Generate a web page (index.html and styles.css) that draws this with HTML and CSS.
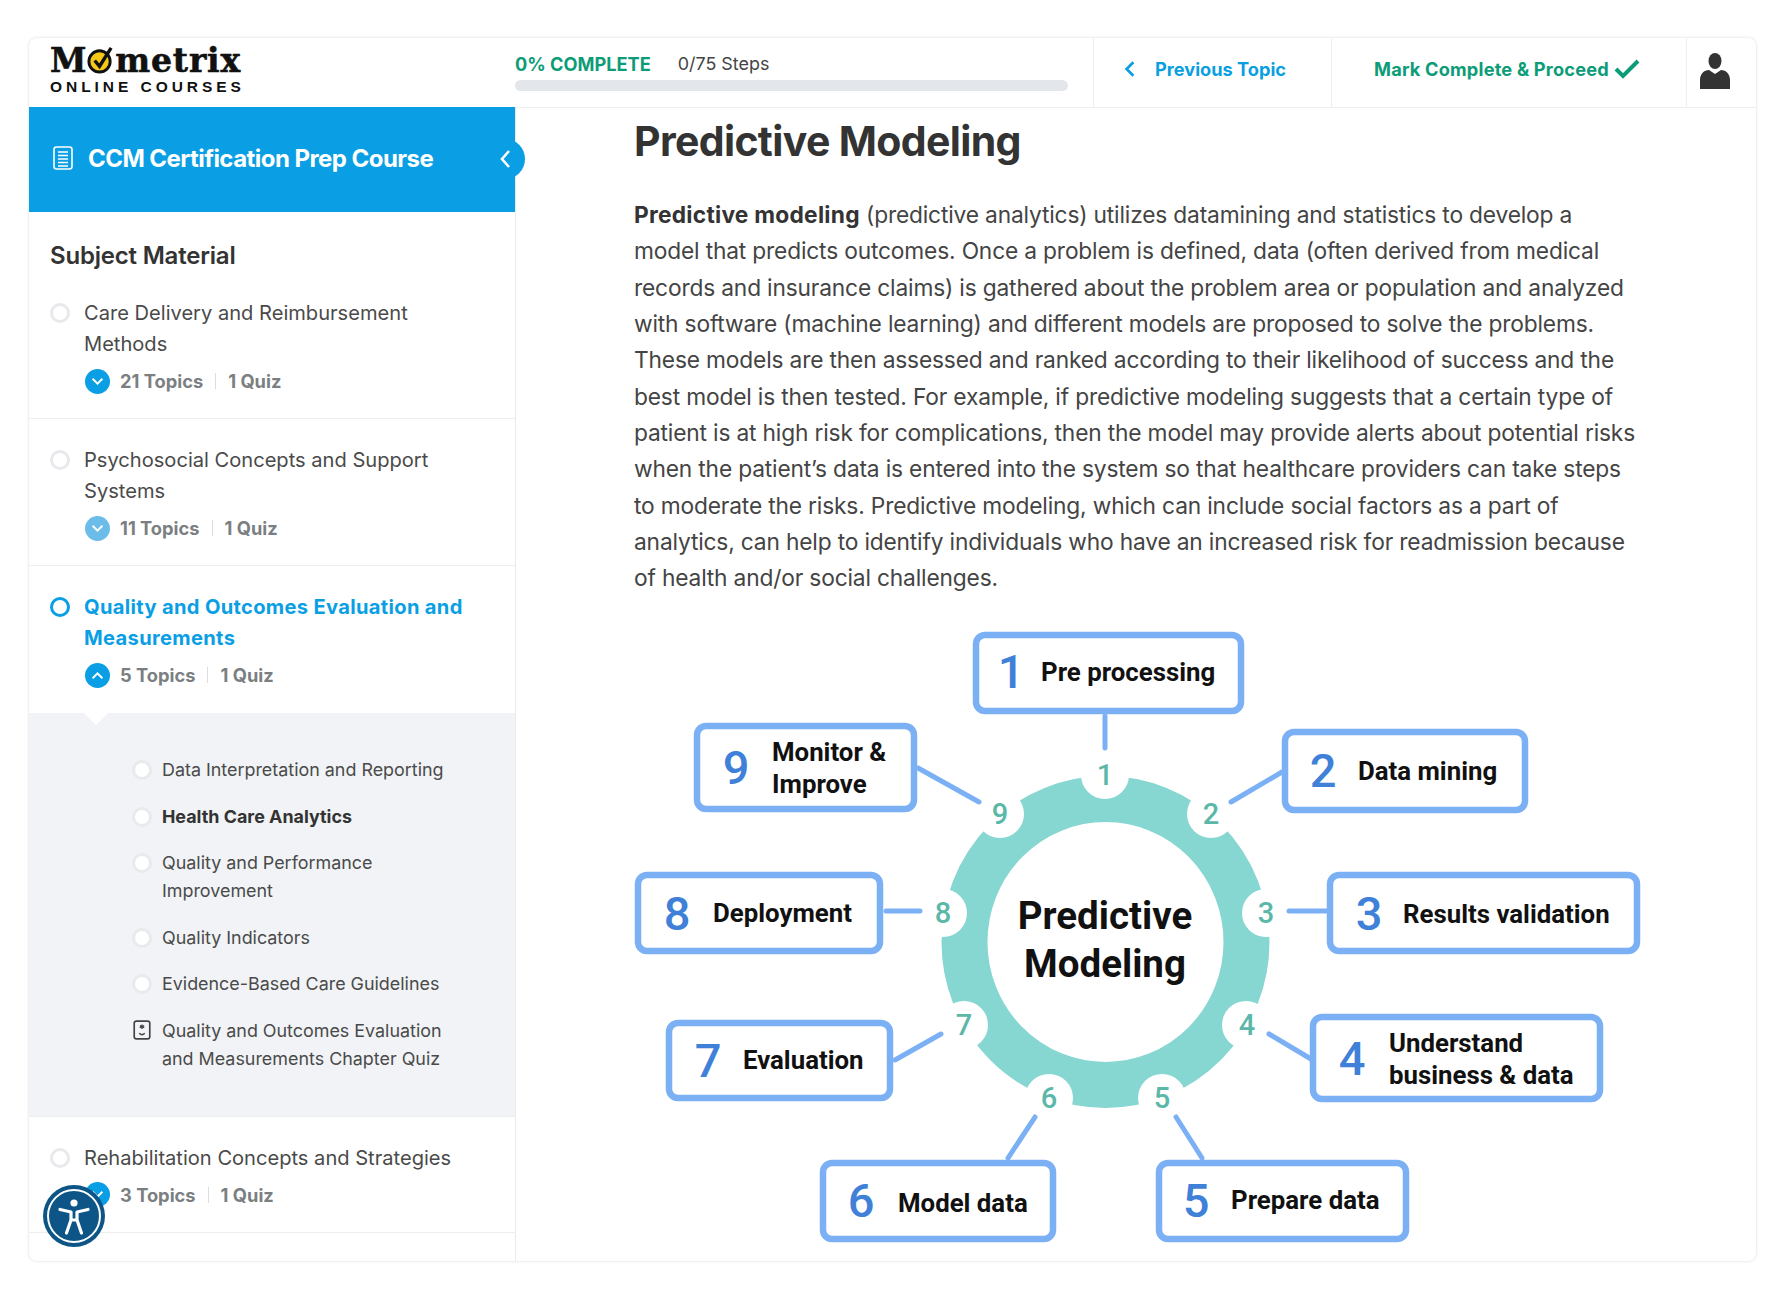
FILE: index.html
```html
<!DOCTYPE html>
<html lang="en">
<head>
<meta charset="utf-8">
<title>Predictive Modeling</title>
<link rel="stylesheet" href="styles.css">
</head>
<body>
<div class="app">
  <header class="topbar">
    <div class="logo">
      <div class="logo-main">M<svg class="logo-o" viewBox="0 0 30 30"><circle cx="14" cy="17" r="11" fill="#f5c818" stroke="#111" stroke-width="3"/><path d="M9 16l5 6 L26 3" fill="none" stroke="#111" stroke-width="3.5"/></svg>metrix</div>
      <div class="logo-sub">ONLINE COURSES</div>
    </div>
    <div class="progress">
      <div class="progress-text"><span class="pct">0% COMPLETE</span><span class="steps">0/75 Steps</span></div>
      <div class="bar"></div>
    </div>
    <a class="nav-btn prev"><svg class="ico-chev" viewBox="0 0 12 16"><path d="M9 2L3 8l6 6" fill="none" stroke="currentColor" stroke-width="2.4"/></svg>Previous Topic</a>
    <a class="nav-btn mark">Mark Complete &amp; Proceed<svg class="ico-check" viewBox="0 0 26 20"><path d="M2 10l7 7L24 2" fill="none" stroke="currentColor" stroke-width="4"/></svg></a>
    <div class="user"><svg viewBox="0 0 32 36" class="ico-user"><ellipse cx="16" cy="8" rx="6.500" ry="8" fill="#333"/><path d="M1 36V27c0-6 4-10 9-10l6 4 6-4c5 0 9 4 9 10v9z" fill="#333"/></svg></div>
  </header>
  <div class="body">
    <aside class="sidebar">
      <div class="course">
        <svg class="ico-book" viewBox="0 0 20 24"><rect x="1" y="1" width="18" height="22" rx="2.5" fill="none" stroke="#fff" stroke-width="1.6"/><path d="M5 6h10M5 9.500h10M5 13h10M5 16.500h10M5 20h10" stroke="#fff" stroke-width="1.3"/></svg>
        <span>CCM Certification Prep Course</span>
        <span class="collapse"><svg viewBox="0 0 12 20"><path d="M10 2L3 10l7 8" fill="none" stroke="#fff" stroke-width="2.6"/></svg></span>
      </div>
      <h2 class="subject">Subject Material</h2>
      <div class="item first">
        <span class="radio"></span>
        <div class="item-body">
          <div class="item-title">Care Delivery and Reimbursement Methods</div>
          <div class="meta"><span class="toggle"><svg viewBox="0 0 12 8"><path d="M1.500 1.500L6 6l4.500-4.500" fill="none" stroke="#fff" stroke-width="1.800"/></svg></span>21 Topics<i></i>1 Quiz</div>
        </div>
      </div>
      <div class="item">
        <span class="radio"></span>
        <div class="item-body">
          <div class="item-title">Psychosocial Concepts and Support Systems</div>
          <div class="meta"><span class="toggle soft"><svg viewBox="0 0 12 8"><path d="M1.500 1.500L6 6l4.500-4.500" fill="none" stroke="#fff" stroke-width="1.800"/></svg></span>11 Topics<i></i>1 Quiz</div>
        </div>
      </div>
      <div class="item active">
        <span class="radio"></span>
        <div class="item-body">
          <div class="item-title">Quality and Outcomes Evaluation and Measurements</div>
          <div class="meta"><span class="toggle"><svg viewBox="0 0 12 8"><path d="M1.500 6.500L6 2l4.500 4.500" fill="none" stroke="#fff" stroke-width="1.800"/></svg></span>5 Topics<i></i>1 Quiz</div>
        </div>
      </div>
      <ul class="topics">
        <li><span class="radio small"></span>Data Interpretation and Reporting</li>
        <li class="current"><span class="radio small"></span>Health Care Analytics</li>
        <li><span class="radio small"></span><span>Quality and Performance<br>Improvement</span></li>
        <li><span class="radio small"></span>Quality Indicators</li>
        <li><span class="radio small"></span>Evidence-Based Care Guidelines</li>
        <li><svg class="ico-quiz" viewBox="0 0 16 18"><rect x="1" y="1" width="14" height="16" rx="2" fill="none" stroke="#444" stroke-width="1.500"/><path d="M8 4v4M5.500 12c1.500 1.500 3.500 1.500 5 0M6 5l4 2M10 5L6 7" stroke="#444" stroke-width="1.200" fill="none"/></svg><span>Quality and Outcomes Evaluation<br>and Measurements Chapter Quiz</span></li>
      </ul>
      <div class="item last">
        <span class="radio"></span>
        <div class="item-body">
          <div class="item-title">Rehabilitation Concepts and Strategies</div>
          <div class="meta"><span class="toggle"><svg viewBox="0 0 12 8"><path d="M1.500 1.500L6 6l4.500-4.500" fill="none" stroke="#fff" stroke-width="1.800"/></svg></span>3 Topics<i></i>1 Quiz</div>
        </div>
      </div>
    </aside>
    <main class="content">
      <h1>Predictive Modeling</h1>
      <p><b>Predictive modeling</b> (predictive analytics) utilizes datamining and statistics to develop a<br>model that predicts outcomes. Once a problem is defined, data (often derived from medical<br>records and insurance claims) is gathered about the problem area or population and analyzed<br>with software (machine learning) and different models are proposed to solve the problems.<br>These models are then assessed and ranked according to their likelihood of success and the<br>best model is then tested. For example, if predictive modeling suggests that a certain type of<br>patient is at high risk for complications, then the model may provide alerts about potential risks<br>when the patient’s data is entered into the system so that healthcare providers can take steps<br>to moderate the risks. Predictive modeling, which can include social factors as a part of<br>analytics, can help to identify individuals who have an increased risk for readmission because<br>of health and/or social challenges.</p>
      <svg class="diagram" viewBox="634 630 1010 620" width="1010" height="620">
        <ellipse class="ring" cx="1105.500" cy="943" rx="141" ry="143"/>
        <g class="notch">
          <circle cx="1105" cy="776" r="24"/><circle cx="1211" cy="815" r="24"/><circle cx="1266" cy="914" r="24"/>
          <circle cx="1246" cy="1026" r="24"/><circle cx="1162" cy="1099" r="24"/><circle cx="1049" cy="1099" r="24"/>
          <circle cx="964" cy="1026" r="24"/><circle cx="943" cy="914" r="24"/><circle cx="1000" cy="815" r="24"/>
        </g>
        <g class="links">
          <path d="M1105 717V749M1231 803L1282 773M1289 912H1328M1269 1035L1311 1060M1176 1118L1202 1159M1035 1118L1008 1159M941 1035L895 1061M886 912H920M918 769L979 803"/>
        </g>
        <g class="boxes">
          <rect x="976" y="636" width="265" height="76" rx="9"/>
          <rect x="1285" y="733" width="240" height="78" rx="9"/>
          <rect x="1330" y="876" width="307" height="76" rx="9"/>
          <rect x="1313" y="1018" width="287" height="82" rx="9"/>
          <rect x="1159" y="1164" width="247" height="76" rx="9"/>
          <rect x="823" y="1164" width="230" height="76" rx="9"/>
          <rect x="669" y="1024" width="221" height="75" rx="9"/>
          <rect x="638" y="876" width="242" height="76" rx="9"/>
          <rect x="697" y="727" width="217" height="83" rx="9"/>
        </g>
        <g class="dig">
          <text x="1105" y="786">1</text><text x="1211" y="825">2</text><text x="1266" y="924">3</text>
          <text x="1247" y="1036">4</text><text x="1162" y="1109">5</text><text x="1049" y="1109">6</text>
          <text x="964" y="1036">7</text><text x="943" y="924">8</text><text x="1000" y="825">9</text>
        </g>
        <g class="num">
          <text x="1011" y="689">1</text><text x="1323" y="788">2</text><text x="1369" y="931">3</text>
          <text x="1352" y="1076">4</text><text x="1196" y="1218">5</text><text x="861" y="1218">6</text>
          <text x="708" y="1078">7</text><text x="677" y="931">8</text><text x="736" y="785">9</text>
        </g>
        <g class="label">
          <text x="1041" y="682">Pre processing</text><text x="1358" y="781">Data mining</text><text x="1403" y="924">Results validation</text>
          <text x="1389" y="1053">Understand</text><text x="1389" y="1085">business &amp; data</text>
          <text x="1231" y="1210">Prepare data</text><text x="898" y="1213">Model data</text><text x="743" y="1070">Evaluation</text>
          <text x="713" y="923">Deployment</text><text x="772" y="762">Monitor &amp;</text><text x="772" y="794">Improve</text>
        </g>
        <g class="hub"><text x="1105" y="930">Predictive</text><text x="1105" y="978">Modeling</text></g>
      </svg>
    </main>
  </div>
</div>
<div class="a11y"><svg viewBox="0 0 62 62"><circle cx="31" cy="31" r="31" fill="#0c5586"/><circle cx="31" cy="31" r="26" fill="#0c5586" stroke="#fff" stroke-width="2"/><circle cx="31" cy="18" r="3.600" fill="#fff"/><path d="M17 24.500l11 2.500v8l-4.500 13M45 24.500l-11 2.500v8l4.500 13M28 35h6" fill="none" stroke="#fff" stroke-width="3.200" stroke-linecap="round" stroke-linejoin="round"/></svg></div>
</body>
</html>
```
FILE: styles.css
```css
* { box-sizing: border-box; }
html, body { margin: 0; height: 100%; background: #fff; }
body { padding: 38px 28px 39px 29px; font-family: Inter, "Liberation Sans", sans-serif; color: #333; overflow: hidden; position: relative; }

.app { height: 1223px; border-radius: 8px; box-shadow: 0 0 3px rgba(0,0,0,.16); display: flex; flex-direction: column; overflow: hidden; background: #fff; }

.topbar { height: 69px; flex: none; display: flex; align-items: stretch; }
.logo { width: 486px; padding: 6px 0 0 21px; color: #111; }
.logo-main { font-family: "DejaVu Serif", serif; font-weight: 700; font-size: 33px; line-height: 34px; letter-spacing: .8px; display: flex; align-items: center; width: 192px; -webkit-text-stroke: .6px #111; white-space: nowrap; }
.logo-o { width: 29px; height: 29px; margin: -3px 0 0 -1px; }
.logo-sub { font-family: "Liberation Sans", sans-serif; font-weight: 700; font-size: 15.500px; line-height: 17px; letter-spacing: 3.950px; white-space: nowrap; }

.progress { width: 578px; padding: 15px 25px 0 0; }
.progress-text { display: flex; gap: 27px; font-size: 18.200px; line-height: 22px; }
.pct { color: #0c9c78; font-weight: 700; }
.steps { color: #444; font-size: 17.900px; line-height: 21px; }
.bar { height: 11px; border-radius: 6px; background: #e3e6eb; margin-top: 5px; }

.nav-btn { display: flex; align-items: center; padding-bottom: 7px; border-left: 1px solid #eee; font-size: 18.200px; font-weight: 700; white-space: nowrap; }
.prev { width: 238px; padding-left: 29px; color: #0a9fe0; }
.ico-chev { width: 14px; height: 18px; margin-right: 18px; }
.mark { width: 355px; padding-left: 42px; color: #0c9c78; letter-spacing: .2px; }
.ico-check { width: 26px; height: 20px; margin-left: 5px; }
.user { flex: 1; border-left: 1px solid #eee; display: flex; align-items: center; justify-content: center; padding-right: 13px; }
.ico-user { width: 32px; height: 36px; margin-top: -4px; }

.body { flex: 1; display: flex; min-height: 0; border-top: 1px solid #eee; }
.sidebar { width: 487px; flex: none; border-right: 1px solid #eaeaea; }
.course { height: 105px; margin-top: -1px; padding: 0 0 3px 24px; background: #0a9fe4; color: #fff; display: flex; align-items: center; font-size: 24px; font-weight: 700; letter-spacing: -.55px; position: relative; width: 486px; }
.ico-book { width: 20px; height: 24px; margin-right: 15px; }
.collapse { position: absolute; left: 456px; top: 32px; width: 40px; height: 40px; border-radius: 50%; background: #0a9fe4; display: flex; align-items: center; justify-content: center; }
.collapse svg { width: 12px; height: 20px; }
.subject { margin: 0; padding: 28px 0 0 21px; font-size: 24px; line-height: 32px; font-weight: 600; color: #333; letter-spacing: -.2px; }

.item { display: flex; padding: 26px 40px 25px 21px; border-bottom: 1px solid #eee; }
.item.first { padding-top: 26px; }
.item.active { border-bottom: 0; padding-bottom: 26px; }
.item.last { border-top: 1px solid #eee; }
.radio { width: 20px; height: 20px; border-radius: 50%; border: 3px solid #e8e9ec; background: #fff; flex: none; margin-top: 5px; }
.item-body { margin-left: 14px; min-width: 0; }
.item-title { font-size: 20.100px; line-height: 31px; color: #4a4a4a; }
.meta { display: flex; align-items: center; height: 24px; margin-top: 9px; font-size: 18.300px; font-weight: 700; color: #7b7f82; }
.meta i { width: 1px; height: 16px; background: #ddd; margin: 0 12px; }
.toggle { width: 25px; height: 25px; border-radius: 50%; background: #0a9fe4; display: flex; align-items: center; justify-content: center; margin: 0 10px 0 1px; }
.toggle.soft { background: #6bbce9; }
.toggle svg { width: 13px; height: 9px; }
.active .radio { border-color: #0a9fe4; }
.active .item-title { color: #0a9fe4; font-weight: 700; letter-spacing: .33px; }

.topics { list-style: none; margin: 0; padding: 43px 40px 43px 103px; background: #f1f3f6; display: flex; flex-direction: column; gap: 18.500px; position: relative; font-size: 17.900px; line-height: 28px; color: #4a4a4a; }
.topics::before { content: ""; position: absolute; left: 55px; top: 0; border: 12px solid transparent; border-top-color: #fff; border-bottom-width: 0; }
.topics li { display: flex; gap: 10px; }
.topics .current { font-weight: 700; color: #333; }
.radio.small { margin-top: 4px; border-color: #e8eaed; }
.ico-quiz { width: 20px; height: 20px; margin-top: 3px; flex: none; }

.content { flex: 1; padding: 8px 0 0 118px; min-width: 0; }
h1 { margin: 0; font-size: 41px; line-height: 50px; font-weight: 700; color: #333; letter-spacing: -.65px; }
p { margin: 31px 0 0; font-size: 22.760px; line-height: 36.350px; color: #444; white-space: nowrap; letter-spacing: -.17px; }
p b { font-weight: 700; color: #333; letter-spacing: .25px; }

.diagram { display: block; margin-top: 32px; overflow: visible; font-family: Roboto, sans-serif; }
.ring { fill: none; stroke: #86d6d2; stroke-width: 46px; }
.notch circle { fill: #fff; }
.links path { fill: none; stroke: #7cb0f5; stroke-width: 5px; stroke-linecap: round; }
.boxes rect { fill: #fff; stroke: #7cb0f5; stroke-width: 6.500px; }
.dig text { font-size: 29px; font-weight: 500; fill: #5bb8a9; text-anchor: middle; }
.num text { font-size: 47px; font-weight: 500; fill: #3f80d8; text-anchor: middle; }
.label text { font-size: 25.800px; font-weight: 700; fill: #111; }
.hub text { font-size: 38.500px; font-weight: 700; fill: #111; text-anchor: middle; }

.a11y { position: absolute; left: 43px; top: 1185px; width: 62px; height: 62px; }
.a11y svg { display: block; width: 62px; height: 62px; }
```
